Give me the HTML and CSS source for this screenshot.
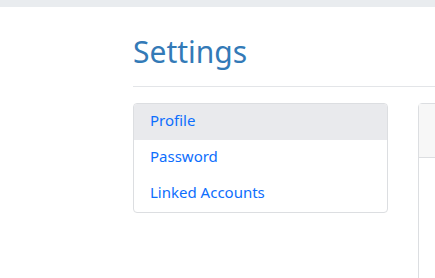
FILE: index.html
```html
<!DOCTYPE html>
<html lang="en">
<head>
  <meta charset="UTF-8">
  <meta name="viewport" content="width=device-width, initial-scale=1.0">
  <title>Settings</title>
  <link rel="stylesheet" href="styles.css">
</head>
<body>

  <div class="topbar"></div>

  <div class="container">
    <h1 class="page-title">Settings</h1>

    <div class="row">
      <!-- Side Menu -->
      <div class="list-group">
        <a href="#" class="list-item active">Profile</a>
        <a href="#" class="list-item">Password</a>
        <a href="#" class="list-item">Linked Accounts</a>
      </div>

      <!-- Content Card -->
      <div class="card">
        <div class="card-header"></div>
        <div class="card-body"></div>
      </div>
    </div>
  </div>

</body>
</html>
```

FILE: styles.css
```css
html, body {
  height: 100%;
}

body {
  font-family: 'Noto Sans', 'Open Sans', sans-serif;
  margin: 0;
  padding: 0;
  background: #fff;
  overflow: hidden;
}

.topbar {
  height: 7px;
  background-color: #e9ecef;
}

.container {
  padding-left: 133px;
  overflow: hidden;
}

.page-title {
  font-size: 30px;
  font-weight: 400;
  color: #337ab7;
  margin: 0;
  padding-top: 25px;
  padding-bottom: 14px;
  line-height: 40px;
  border-bottom: 1px solid #e3e5e8;
}

.row {
  display: flex;
  gap: 30px;
  margin-top: 16px;
}

.list-group {
  width: 253px;
  flex-shrink: 0;
  align-self: flex-start;
  border: 1px solid #dcdee1;
  border-radius: 4px;
  overflow: hidden;
  display: flex;
  flex-direction: column;
}

.list-item {
  display: block;
  height: 36px;
  line-height: 32px;
  padding-left: 16px;
  font-size: 15px;
  color: #0d6efd;
  text-decoration: none;
}

.list-item.active {
  background-color: #e9eaed;
}

.card {
  flex: 1;
  height: 180px;
  margin-right: -8px;
  border: 1px solid #dcdee1;
  border-radius: 4px 0 0 0;
}

.card-header {
  height: 53px;
  background-color: #f7f7f7;
  border-bottom: 1px solid #dcdee1;
}
```
